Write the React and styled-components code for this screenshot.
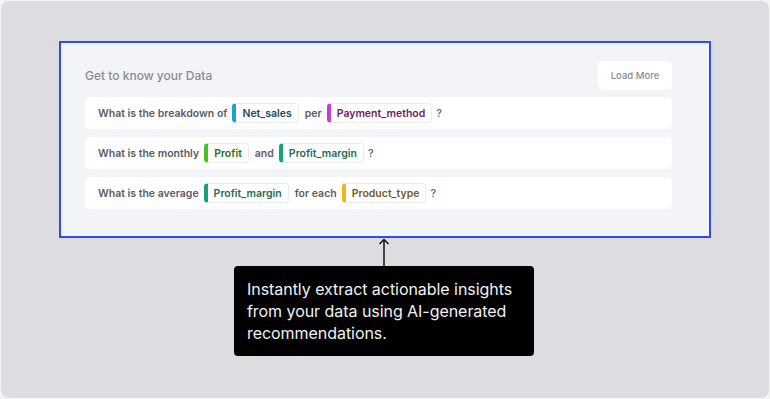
import React from "react";
import styled, { createGlobalStyle } from "styled-components";

const GlobalStyle = createGlobalStyle`
  html, body {
    margin: 0;
    padding: 0;
    background: #f4f4f6;
  }
  body {
    font-family: Inter, "Liberation Sans", sans-serif;
  }
`;

const Frame = styled.div`
  margin: 1px;
  height: 397px;
  box-sizing: border-box;
  background: #dddce1;
  border-radius: 8px;
  padding: 40px 58px 0 58px;
  display: flex;
  flex-direction: column;
  align-items: center;
`;

const Panel = styled.div`
  align-self: stretch;
  box-sizing: border-box;
  height: 197px;
  border: 2px solid #2d4bf0;
  background: #f3f4f8;
  padding: 18px 37px 0 24px;
  display: flex;
  flex-direction: column;
  gap: 8px;
`;

const Header = styled.div`
  display: flex;
  align-items: center;
  justify-content: space-between;
  height: 29px;
  margin-bottom: -1px;
`;

const Title = styled.span`
  font-size: 12px;
  font-weight: 500;
  color: #8b8b90;
`;

const LoadButton = styled.button`
  height: 29px;
  width: 74px;
  border: none;
  border-radius: 5px;
  background: #ffffff;
  font-family: inherit;
  font-size: 9.5px;
  font-weight: 500;
  color: #8a8a8e;
  padding: 0;
`;

const Row = styled.div`
  height: 32px;
  background: #ffffff;
  border-radius: 5px;
  display: flex;
  align-items: center;
  padding-left: 13px;
  gap: 5px;
  font-size: 10.5px;
  font-weight: 600;
  color: #5b5b62;
`;

const Chip = styled.span`
  display: inline-flex;
  align-items: center;
  height: 20px;
  box-sizing: border-box;
  padding: 0 6px 0 6px;
  border: 1px solid #ececef;
  border-left: 4px solid ${(p) => p.bar};
  border-radius: 4px;
  color: ${(p) => p.ink};
  margin-right: 1px;
`;

const Question = styled.span`
  color: #6b6b70;
  margin-left: -2px;
`;

const Pointer = styled.div`
  display: flex;
  flex-direction: column;
  align-items: center;
  margin-right: 2px;
`;

const Arrow = styled.svg`
  display: block;
`;

const Tooltip = styled.div`
  width: 300px;
  height: 90px;
  box-sizing: border-box;
  background: #000000;
  border-radius: 4px;
  padding: 12px 13px;
  color: #f2f2f2;
  font-size: 16px;
  line-height: 22px;
  font-weight: 400;
  letter-spacing: -0.05px;
`;

const chips = {
  Net_sales: { bar: "#1ca3c9", ink: "#1d4b5c" },
  Payment_method: { bar: "#c63bd8", ink: "#6b1d5e" },
  Profit: { bar: "#49c21f", ink: "#2c6b1f" },
  Profit_margin: { bar: "#13a27c", ink: "#1f6b56" },
  Product_type: { bar: "#ebb912", ink: "#6e5c1e" },
};

const questions = [
  ["What is the breakdown of", "Net_sales", "per", "Payment_method"],
  ["What is the monthly", "Profit", "and", "Profit_margin"],
  ["What is the average", "Profit_margin", "for each", "Product_type"],
];

const Field = ({ name }) => (
  <Chip bar={chips[name].bar} ink={chips[name].ink}>
    {name}
  </Chip>
);

const App = () => {
  return (
    <>
      <GlobalStyle />
      <Frame>
        <Panel>
          <Header>
            <Title>Get to know your Data</Title>
            <LoadButton>Load More</LoadButton>
          </Header>
          {questions.map(([lead, a, mid, b]) => (
            <Row key={lead}>
              <span>{lead}</span>
              <Field name={a} />
              <span>{mid}</span>
              <Field name={b} />
              <Question>?</Question>
            </Row>
          ))}
        </Panel>
        <Pointer>
          <Arrow width="12" height="28" viewBox="0 0 12 28">
            <path
              d="M6 28V1.5M1.5 6L6 1.5L10.5 6"
              fill="none"
              stroke="#111"
              strokeWidth="1.5"
            />
          </Arrow>
          <Tooltip>
            Instantly extract actionable insights from your data using
            AI-generated recommendations.
          </Tooltip>
        </Pointer>
      </Frame>
    </>
  );
};

export default App;
